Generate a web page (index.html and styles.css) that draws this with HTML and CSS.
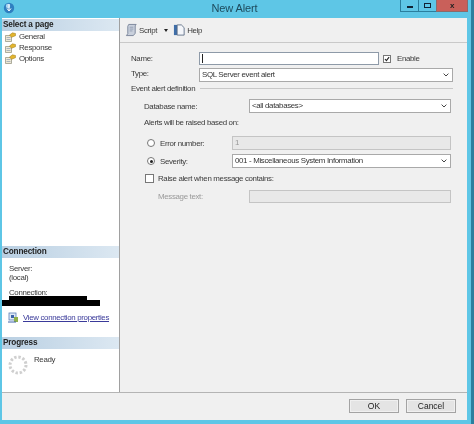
FILE: index.html
```html
<!DOCTYPE html>
<html lang="en">
<head>
<meta charset="utf-8">
<title>New Alert</title>
<link rel="stylesheet" href="styles.css">
</head>
<body>
<div class="window">
  <header class="titlebar">
    <svg class="app-icon" viewBox="0 0 12 12"><circle cx="6" cy="6" r="5.2" fill="#2f7fc0"/><circle cx="5" cy="4" r="2.2" fill="#a9d4f0"/><path d="M6 2v6M4 6.5 6 9l2-2.5" fill="none" stroke="#fff" stroke-width="1"/></svg>
    <div class="title">New Alert</div>
    <div class="controls">
      <div class="ctl"><span class="min"></span></div>
      <div class="ctl"><span class="max"></span></div>
      <div class="ctl close"><span>x</span></div>
    </div>
  </header>
  <div class="body">
    <aside class="sidebar">
      <div class="sec-head first">Select a page</div>
      <ul class="pages">
        <li><svg class="page-ic" viewBox="0 0 11 10"><use href="#wrench"/></svg>General</li>
        <li><svg class="page-ic" viewBox="0 0 11 10"><use href="#wrench"/></svg>Response</li>
        <li><svg class="page-ic" viewBox="0 0 11 10"><use href="#wrench"/></svg>Options</li>
      </ul>
      <div class="sec-head">Connection</div>
      <div class="conn">
        <div class="line">Server:</div>
        <div class="line">(local)</div>
        <div class="line gap">Connection:</div>
        <div class="redact-a"></div>
        <div class="redact-b"></div>
        <div class="link-row">
          <svg class="link-ic" viewBox="0 0 11 11"><rect x="1" y="1" width="7" height="7" fill="#dfe8f5" stroke="#5a7fb8" stroke-width=".8"/><rect x="3" y="3" width="3" height="3" fill="#3d63a8"/><rect x="6" y="5" width="4" height="5" fill="#8fb04a"/><path d="M0 10h8" stroke="#3d63a8"/></svg>
          <a class="link">View connection properties</a>
        </div>
      </div>
      <div class="sec-head">Progress</div>
      <div class="prog">
        <svg class="spinner" viewBox="0 0 20 20"><circle cx="10" cy="10" r="8" fill="none" stroke="#cfcfcf" stroke-width="3" stroke-dasharray="2.4 1.8"/></svg>
        <span class="ready">Ready</span>
      </div>
    </aside>
    <main class="content">
      <div class="toolbar">
        <svg class="tb-ic" viewBox="0 0 14 14"><path d="M4 1h8l-1 1.5v8L9 13H1.5L3 11V3z" fill="#c9d0dc" stroke="#6d7a90" stroke-width=".9"/><path d="M5 4h4M5 6h4M5 8h3" stroke="#7d8aa0" stroke-width=".7"/></svg>
        <span class="tb-text">Script</span>
        <span class="caret"></span>
        <svg class="tb-ic help" viewBox="0 0 14 14"><path d="M1 1.5h3.5v11H1z" fill="#3f6ea8"/><path d="M4.5 1.5H9l3 3v8H4.5z" fill="#f4f6fa" stroke="#56677f" stroke-width=".9"/></svg>
        <span class="tb-text">Help</span>
      </div>
      <form class="form">
        <div class="row r-name">
          <label class="lbl">Name:</label>
          <div class="field name-input"><span class="cursor"></span></div>
          <span class="check checked"><svg viewBox="0 0 8 8"><path d="M1.3 4 3.2 6.2 6.8 1.4" fill="none" stroke="#222" stroke-width="1.5"/></svg></span>
          <span class="enable">Enable</span>
        </div>
        <div class="row r-type">
          <label class="lbl">Type:</label>
          <div class="field select grow">SQL Server event alert<svg class="chev" viewBox="0 0 6 4"><path d="M.6.6 3 3 5.4.6" fill="none" stroke="#444" stroke-width="1"/></svg></div>
        </div>
        <div class="group-title"><span class="gt-text">Event alert definition</span><i class="rule"></i></div>
        <div class="group">
          <div class="row r-db">
            <label class="lbl wide">Database name:</label>
            <div class="field select grow">&lt;all databases&gt;<svg class="chev" viewBox="0 0 6 4"><path d="M.6.6 3 3 5.4.6" fill="none" stroke="#444" stroke-width="1"/></svg></div>
          </div>
          <div class="based">Alerts will be raised based on:</div>
          <div class="row r-err">
            <span class="radio"></span>
            <label class="rlbl">Error number:</label>
            <div class="field disabled grow">1</div>
          </div>
          <div class="row r-sev">
            <span class="radio on"></span>
            <label class="rlbl">Severity:</label>
            <div class="field select grow">001 - Miscellaneous System Information<svg class="chev" viewBox="0 0 6 4"><path d="M.6.6 3 3 5.4.6" fill="none" stroke="#444" stroke-width="1"/></svg></div>
          </div>
          <div class="row r-raise">
            <span class="check"></span>
            <label class="raise">Raise alert when message contains:</label>
          </div>
          <div class="row r-msg">
            <label class="lbl msg">Message text:</label>
            <div class="field disabled grow"></div>
          </div>
        </div>
      </form>
    </main>
  </div>
  <footer class="footer">
    <button class="btn" type="button">OK</button>
    <button class="btn" type="button">Cancel</button>
  </footer>
</div>
<svg class="defs" width="0" height="0"><defs><g id="wrench"><path d="M0.5 3.5h6v6h-6z" fill="#efe9d6" stroke="#8c8c7a" stroke-width=".7"/><path d="M1.5 5.5h4M1.5 7.5h4" stroke="#8f9db0" stroke-width=".7"/><path d="M4.5 3 7.5.8l3 .7v2.2l-4 1.6z" fill="#e3b52e" stroke="#9a7a1c" stroke-width=".5"/></g></defs></svg>
</body>
</html>
```
FILE: styles.css
```css
* { box-sizing: border-box; }
html, body { margin: 0; padding: 0; }
body { width: 474px; height: 424px; overflow: hidden; background: #5ec6e6; font-family: "Liberation Sans", Arial, sans-serif; font-size: 7.9px; letter-spacing: -.33px; color: #3a3a3a; }
.window { width: 474px; height: 424px; display: flex; flex-direction: column; padding: 0 7px 4px 2px; background: linear-gradient(90deg, #5ec6e6 0 471px, #2b7f9e 471px); filter: blur(.35px); }
.titlebar { height: 18px; flex: none; display: flex; align-items: flex-start; position: relative; }
.app-icon { width: 12px; height: 12px; margin: 2px 0 0 1px; }
.title { position: absolute; left: 0; right: 0; top: 2px; text-align: center; font-size: 11px; letter-spacing: -.1px; line-height: 13px; color: #1d4a5c; }
.controls { margin-left: auto; margin-right: -1px; display: flex; height: 12px; }
.ctl { width: 19px; height: 12px; border: 1px solid #2b7f9e; border-top: 0; margin-left: -1px; display: flex; align-items: center; justify-content: center; }
.close { width: 32px; background: #c9605a; border-color: #8c6a6a; color: #222; font-weight: bold; font-size: 8px; line-height: 10px; }
.min { width: 6px; height: 2px; background: #123; margin-top: 3px; }
.max { width: 7px; height: 5px; border: 1.5px solid #123; }
.body { flex: 1; display: flex; min-height: 0; }
.sidebar { width: 118px; flex: none; background: #fff; border-right: 1px solid #a0a0a0; display: flex; flex-direction: column; }
.sec-head { height: 12px; line-height: 12px; padding-left: 1px; font-size: 8.2px; letter-spacing: -.15px; font-weight: bold; color: #222; background: linear-gradient(90deg, #b9cfe2, #dce8f2); flex: none; }
.sec-head.first { margin-top: 1px; }
.pages { list-style: none; margin: 0; padding: 0 0 0 3px; flex: 1; }
.pages li { height: 11px; line-height: 11px; display: flex; align-items: center; gap: 3px; margin-top: 0; }
.page-ic { width: 11px; height: 10px; }
.conn { height: 79px; flex: none; padding-left: 7px; position: relative; }
.line { line-height: 9px; }
.line:first-child { margin-top: 6px; }
.gap { margin-top: 6px; }
.redact-a { position: absolute; left: 7px; top: 38px; width: 78px; height: 5px; background: #000; }
.redact-b { position: absolute; left: 0; top: 42px; width: 98px; height: 6px; background: #000; }
.link-row { position: absolute; left: 6px; top: 54px; display: flex; align-items: center; gap: 4px; }
.link-ic { width: 11px; height: 11px; }
.link { color: #3a3a9a; text-decoration: underline; }
.prog { flex: none; height: 43px; display: flex; align-items: flex-start; padding-left: 6px; padding-top: 6px; }
.spinner { width: 20px; height: 20px; }
.ready { margin-left: 6px; line-height: 9px; margin-top: 0; }
.content { flex: 1; min-width: 0; background: #f0f0f0; display: flex; flex-direction: column; }
.toolbar { height: 25px; flex: none; display: flex; align-items: center; padding-left: 5px; border-bottom: 1px solid #c9c9c9; }
.tb-ic { width: 13px; height: 14px; }
.tb-text { margin-left: 1px; }
.caret { width: 0; height: 0; border: 2.5px solid transparent; border-top: 3px solid #222; border-bottom: 0; margin-left: 7px; margin-right: 5px; }
.form { padding: 9px 14px 0 11px; }
.row { display: flex; align-items: center; }
.lbl { width: 68px; flex: none; }
.field { height: 13px; line-height: 11px; background: #fff; border: 1px solid #a9a9a9; padding-left: 2px; position: relative; display: block; }
.grow { flex: 1; }
.select { color: #333; padding-left: 2px; }
.chev { position: absolute; right: 3px; top: 4px; width: 6px; height: 4px; }
.name-input { width: 180px; border-color: #8e9aa8; }
.cursor { display: block; width: 1px; height: 9px; background: #222; margin-top: 1px; }
.check { width: 8px; height: 8px; background: #fff; border: 1px solid #777; display: inline-block; flex: none; }
.check svg { display: block; width: 6px; height: 6px; }
.r-name .check { margin-left: 4px; }
.enable { margin-left: 6px; }
.r-name { height: 13px; }
.r-type { height: 14px; margin-top: 3px; }
.r-type .lbl { margin-bottom: 4px; }
.r-type .field { height: 14px; line-height: 12px; }
.group-title { display: flex; align-items: center; margin-top: 1px; height: 11px; }
.gt-text { width: 69px; flex: none; }
.rule { flex: 1; height: 1px; background: #c8c8c8; display: block; }
.group { padding-left: 13px; padding-right: 2px; padding-top: 5px; }
.lbl.wide { width: 105px; }
.r-db { height: 14px; }
.r-db .field { height: 14px; line-height: 12px; }
.based { line-height: 9px; margin-top: 5px; }
.r-err { height: 14px; margin-top: 9px; }
.r-err .field, .r-sev .field { height: 14px; line-height: 12px; }
.disabled { background: #e8e8e8; border-color: #c4c4c4; color: #999; }
.radio { width: 8px; height: 8px; border: 1px solid #777; border-radius: 50%; background: #fff; margin-left: 3px; flex: none; position: relative; }
.radio.on::after { content: ""; position: absolute; left: 1.5px; top: 1.5px; width: 3px; height: 3px; border-radius: 50%; background: #222; }
.rlbl { margin-left: 5px; width: 72px; flex: none; }
.r-sev { height: 14px; margin-top: 4px; }
.r-raise { height: 9px; margin-top: 6px; }
.r-raise .check { margin-left: 1px; width: 9px; height: 9px; }
.raise { margin-left: 4px; }
.r-msg { height: 14px; margin-top: 6px; }
.lbl.msg { margin-left: 14px; width: 91px; color: #999; }
.footer { height: 28px; flex: none; background: #f0f0f0; border-top: 1px solid #b4b4b4; display: flex; justify-content: flex-end; align-items: center; gap: 7px; padding-right: 11px; padding-bottom: 1px; }
.btn { width: 50px; height: 14px; padding: 0; background: #e4e4e4; border: 1px solid #a3a3a3; font: inherit; color: #222; font-size: 8.5px; box-shadow: inset 0 0 0 1px #f0f0f0; }
.defs { position: absolute; }
```
